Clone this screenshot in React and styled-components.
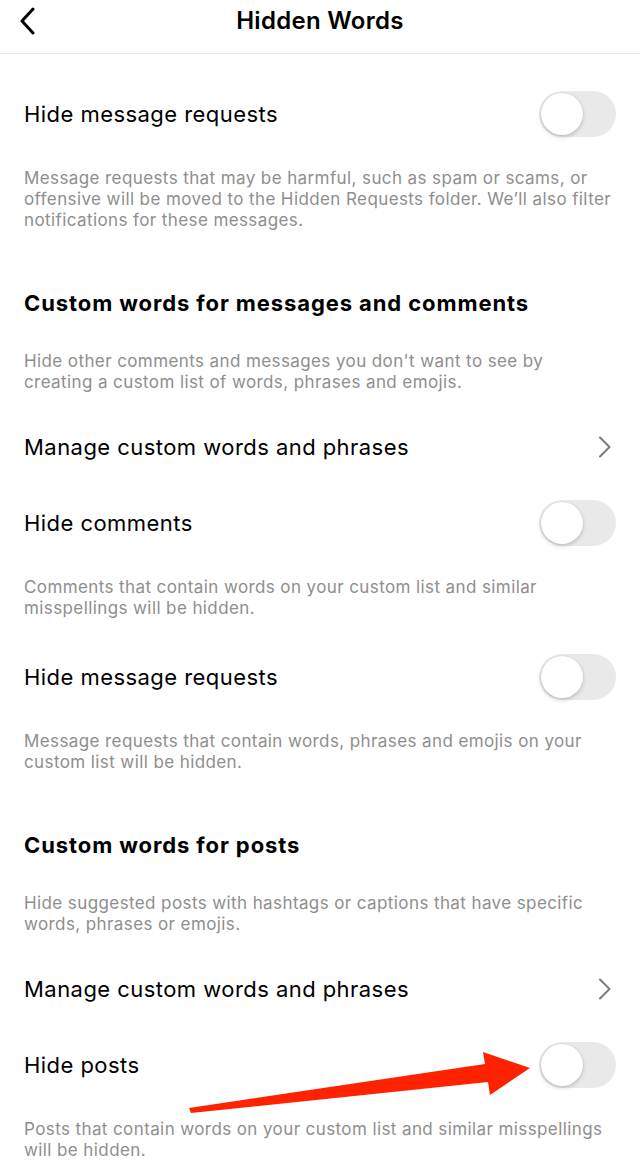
import React, { useState } from "react";
import styled, { createGlobalStyle } from "styled-components";

const GlobalStyle = createGlobalStyle`
  * { box-sizing: border-box; }
  body {
    margin: 0;
    background: #fff;
    font-family: Inter, "Noto Sans", sans-serif;
    color: #000;
  }
`;

const Page = styled.div`
  position: relative;
  width: 640px;
  min-height: 1165px;
  overflow: hidden;
`;

const Header = styled.header`
  height: 54px;
  display: flex;
  align-items: center;
  justify-content: center;
  position: relative;
  border-bottom: 1px solid #e6e6e6;
  padding-bottom: 13px;
`;

const BackButton = styled.button`
  position: absolute;
  left: 14px;
  top: 5px;
  border: none;
  background: none;
  padding: 0;
  width: 28px;
  height: 32px;
  display: flex;
  align-items: center;
  justify-content: center;
  cursor: pointer;
`;

const Title = styled.h1`
  margin: 0;
  font-size: 24px;
  font-weight: 600;
  letter-spacing: 0.3px;
`;

const Content = styled.main`
  display: flex;
  flex-direction: column;
  padding-top: 22px;
`;

const Row = styled.div`
  height: 76px;
  padding: 0 24px;
  display: flex;
  align-items: center;
  justify-content: space-between;
  cursor: ${(p) => (p.$link ? "pointer" : "default")};
`;

const Label = styled.span`
  font-size: 22px;
  font-weight: 400;
  letter-spacing: 0.45px;
`;

const Note = styled.p`
  margin: ${(p) => p.$top}px 0 ${(p) => p.$bottom}px;
  padding: 0 24px;
  font-size: 17px;
  line-height: 21px;
  color: #8e8e8e;
  letter-spacing: 0.4px;
`;

const Heading = styled.h2`
  margin: 38px 0 0;
  padding: 0 24px;
  font-size: 22px;
  line-height: 28px;
  font-weight: 700;
  letter-spacing: 0.9px;
`;

const Track = styled.button`
  width: 77px;
  height: 46px;
  border: none;
  border-radius: 23px;
  padding: 2px;
  background: ${(p) => (p.$on ? "#34c759" : "#e9e9ea")};
  display: flex;
  justify-content: ${(p) => (p.$on ? "flex-end" : "flex-start")};
  cursor: pointer;
`;

const Knob = styled.span`
  width: 42px;
  height: 42px;
  border-radius: 50%;
  background: #fff;
  box-shadow: 0 2px 4px rgba(0, 0, 0, 0.18), 0 0 0 0.5px rgba(0, 0, 0, 0.06);
`;

const ChevronIcon = styled.svg`
  margin-right: 4px;
`;

const Arrow = styled.svg`
  position: absolute;
  left: 0;
  top: 0;
  pointer-events: none;
`;

function Toggle({ on, onChange }) {
  return (
    <Track $on={on} onClick={() => onChange(!on)}>
      <Knob />
    </Track>
  );
}

function Chevron() {
  return (
    <ChevronIcon width="14" height="22" viewBox="0 0 14 22">
      <path d="M2 1.5 L11.5 11 L2 20.5" fill="none" stroke="#7a7a7a" strokeWidth="2" strokeLinecap="round" strokeLinejoin="round" />
    </ChevronIcon>
  );
}

function ToggleSetting({ label, note, on, onChange }) {
  return (
    <>
      <Row>
        <Label>{label}</Label>
        <Toggle on={on} onChange={onChange} />
      </Row>
      <Note $top={16} $bottom={20}>{note}</Note>
    </>
  );
}

function LinkRow({ label }) {
  return (
    <Row $link>
      <Label>{label}</Label>
      <Chevron />
    </Row>
  );
}

export default function App() {
  const [toggles, setToggles] = useState({
    requests: false,
    comments: false,
    customRequests: false,
    posts: false,
  });
  const set = (key) => (value) => setToggles((prev) => ({ ...prev, [key]: value }));

  return (
    <Page>
      <GlobalStyle />
      <Header>
        <BackButton aria-label="Back">
          <svg width="22" height="28" viewBox="0 0 22 28">
            <path d="M16 2 L5 14 L16 26" fill="none" stroke="#000" strokeWidth="3" strokeLinecap="round" strokeLinejoin="round" />
          </svg>
        </BackButton>
        <Title>Hidden Words</Title>
      </Header>

      <Content>
        <ToggleSetting
          label="Hide message requests"
          note="Message requests that may be harmful, such as spam or scams, or offensive will be moved to the Hidden Requests folder. We’ll also filter notifications for these messages."
          on={toggles.requests}
          onChange={set("requests")}
        />

        <Heading>Custom words for messages and comments</Heading>
        <Note $top={34} $bottom={16}>
          Hide other comments and messages you don't want to see by creating a custom list of words, phrases and emojis.
        </Note>
        <LinkRow label="Manage custom words and phrases" />
        <ToggleSetting
          label="Hide comments"
          note="Comments that contain words on your custom list and similar misspellings will be hidden."
          on={toggles.comments}
          onChange={set("comments")}
        />
        <ToggleSetting
          label="Hide message requests"
          note="Message requests that contain words, phrases and emojis on your custom list will be hidden."
          on={toggles.customRequests}
          onChange={set("customRequests")}
        />

        <Heading>Custom words for posts</Heading>
        <Note $top={34} $bottom={16}>
          Hide suggested posts with hashtags or captions that have specific words, phrases or emojis.
        </Note>
        <LinkRow label="Manage custom words and phrases" />
        <ToggleSetting
          label="Hide posts"
          note="Posts that contain words on your custom list and similar misspellings will be hidden."
          on={toggles.posts}
          onChange={set("posts")}
        />
      </Content>

      <Arrow width="640" height="1165" viewBox="0 0 640 1165">
        <polygon
          points="189,1108 485,1064 483,1052 530,1068 490,1095 488,1082 191,1113"
          fill="#ff2200"
        />
      </Arrow>
    </Page>
  );
}
